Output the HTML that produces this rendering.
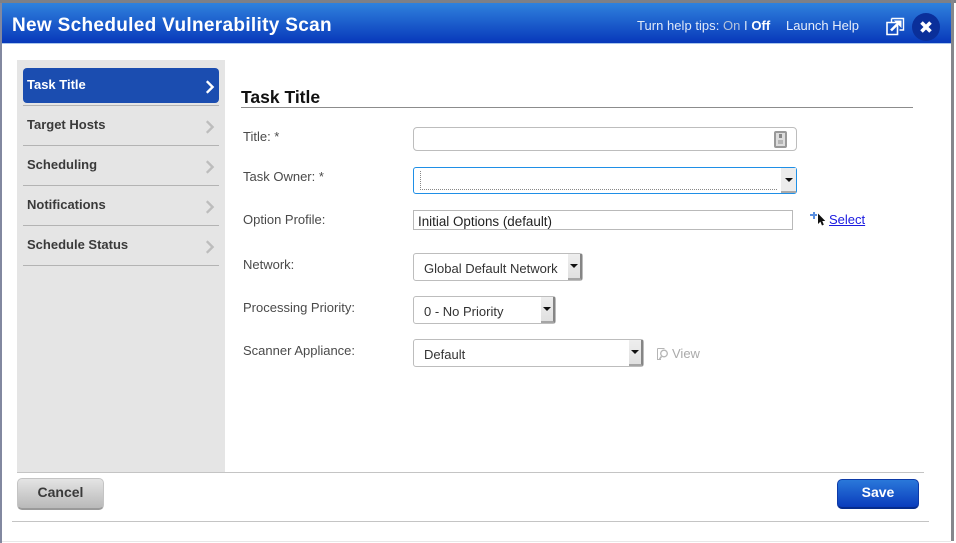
<!DOCTYPE html>
<html><head><meta charset="utf-8"><style>
html,body{margin:0;padding:0;background:#fff}
body{width:956px;height:543px;position:relative;overflow:hidden;font-family:"Liberation Sans",sans-serif}
div,a,span.a{position:absolute;box-sizing:border-box;white-space:nowrap}
.nav{left:27px;font-size:13px;font-weight:bold;color:#3a3a3a;line-height:16px}
.ln{left:23px;width:196px;height:1px;background:#b3b3b3}
.lab{left:243px;font-size:13px;color:#4a4a4a;line-height:16px}
.sel{background:#fff;border:1px solid #bdbdbd;border-radius:3px;font-size:13px;color:#333;line-height:16px}
.btn{top:0;right:0;width:14px;background:linear-gradient(#eeeeee,#e0e0e0);border-right:2px solid #858585;border-bottom:2px solid #a5a5a5}
.tri{width:0;height:0;border-left:4px solid transparent;border-right:4px solid transparent;border-top:4px solid #111}
</style></head><body>
<div style="left:0;top:0;width:956px;height:3px;background:#7d8087"></div>
<div style="left:0;top:3px;width:2px;height:540px;background:#8288a0"></div>
<div style="left:951px;top:0;width:3px;height:541px;background:#85878c"></div>
<div style="left:2px;top:3px;width:949px;height:41px;background:linear-gradient(#2f82dd,#0838ba);border-bottom:1px solid #a9c6ec"></div>
<div style="left:12px;top:14px;font-size:19px;font-weight:bold;color:#fff;line-height:24px;letter-spacing:.32px">New Scheduled Vulnerability Scan</div>
<div style="left:637px;top:18px;font-size:13px;color:#dfe9f8;line-height:16px;letter-spacing:.03px">Turn help tips: <span style="color:#b4c3dc">On</span> I <b style="color:#fff">Off</b></div>
<div style="left:786px;top:18px;font-size:13px;color:#e6eefa;line-height:16px">Launch Help</div>
<svg style="position:absolute;left:886px;top:17px" width="19" height="19" viewBox="0 0 19 19" fill="none" stroke="#fff"><path d="M5.5 1.5H17.5V13H13.5M5.5 1.5V5.5" stroke-width="1.4"/><path d="M1 5.5H11.5V17.5H1Z" stroke-width="1.6"/><path d="M5 13.5L11.5 7" stroke-width="2.6"/><path d="M8 3.5H15.5V11Z" fill="#fff" stroke="none"/></svg>
<div style="left:912px;top:13px;width:28px;height:28px;border-radius:50%;background:#0a2f9a"></div>
<svg style="position:absolute;left:912px;top:13px" width="28" height="28" viewBox="0 0 28 28"><path d="M9.5 9.5L18.5 18.5M18.5 9.5L9.5 18.5" stroke="#fff" stroke-width="3.6" fill="none"/></svg>

<div style="left:17px;top:60px;width:208px;height:412px;background:#e5e5e5"></div>
<div style="left:23px;top:68px;width:196px;height:35px;background:#1b4db0;border-radius:4px"></div>
<div class="nav" style="top:77px;color:#fff">Task Title</div>
<div class="nav" style="top:117px">Target Hosts</div>
<div class="nav" style="top:157px">Scheduling</div>
<div class="nav" style="top:197px">Notifications</div>
<div class="nav" style="top:237px">Schedule Status</div>
<div class="ln" style="top:105px"></div><div class="ln" style="top:145px"></div><div class="ln" style="top:185px"></div><div class="ln" style="top:225px"></div><div class="ln" style="top:265px"></div>
<svg style="position:absolute;left:205px;top:80px" width="10" height="14" viewBox="0 0 10 14"><path d="M1.8 1.2L7.6 7L1.8 12.8" stroke="#fff" stroke-width="2.4" fill="none"/></svg>
<svg style="position:absolute;left:205px;top:120px" width="10" height="14" viewBox="0 0 10 14"><path d="M1.8 1.2L7.6 7L1.8 12.8" stroke="#bdbdbd" stroke-width="2.4" fill="none"/></svg>
<svg style="position:absolute;left:205px;top:160px" width="10" height="14" viewBox="0 0 10 14"><path d="M1.8 1.2L7.6 7L1.8 12.8" stroke="#bdbdbd" stroke-width="2.4" fill="none"/></svg>
<svg style="position:absolute;left:205px;top:200px" width="10" height="14" viewBox="0 0 10 14"><path d="M1.8 1.2L7.6 7L1.8 12.8" stroke="#bdbdbd" stroke-width="2.4" fill="none"/></svg>
<svg style="position:absolute;left:205px;top:240px" width="10" height="14" viewBox="0 0 10 14"><path d="M1.8 1.2L7.6 7L1.8 12.8" stroke="#bdbdbd" stroke-width="2.4" fill="none"/></svg>

<div style="left:241px;top:87px;font-size:17.5px;font-weight:bold;color:#111;line-height:20px">Task Title</div>
<div style="left:241px;top:107px;width:672px;height:1px;background:#8c8c8c"></div>

<div class="lab" style="top:129px">Title: *</div>
<div class="lab" style="top:169px">Task Owner: *</div>
<div class="lab" style="top:212px">Option Profile:</div>
<div class="lab" style="top:257px">Network:</div>
<div class="lab" style="top:300px">Processing Priority:</div>
<div class="lab" style="top:343px">Scanner Appliance:</div>

<div style="left:413px;top:127px;width:384px;height:24px;border:1px solid #bdbdbd;border-radius:4px;background:#fff"></div>
<div style="left:774px;top:131px;width:13px;height:17px;border:2px solid #999;border-radius:2px;background:#ddd"></div>
<div style="left:779px;top:134px;width:3px;height:4px;background:#888"></div>
<div style="left:778px;top:140px;width:5px;height:4px;background:#b5b5b5"></div>

<div style="left:413px;top:167px;width:384px;height:27px;border:1px solid #1f8fe6;border-radius:3px;background:#fff"></div>
<div style="left:420px;top:171px;width:357px;height:19px;border-left:1px dotted #888;border-bottom:1px dotted #888"></div>
<div style="left:781px;top:168px;width:15px;height:25px;background:#ececec;border-bottom:2px solid #aaa"></div>
<div class="tri" style="left:785px;top:178px"></div>

<div style="left:413px;top:210px;width:380px;height:20px;border:1px solid #b9b9b9;font-size:13.4px;color:#222;line-height:21px;padding-left:4px">Initial Options (default)</div>
<div style="left:810px;top:214px;width:7px;height:2px;background:#5a8fe0"></div>
<div style="left:812.5px;top:211.5px;width:2px;height:7px;background:#5a8fe0"></div>
<svg style="position:absolute;left:817px;top:213px" width="9" height="13" viewBox="0 0 9 13"><path d="M1 0.5V11L3.4 8.6L5 12.5L6.8 11.6L5.3 8H8.3Z" fill="#111"/></svg>
<a style="left:829px;top:212px;font-size:13px;color:#1a1ae0;line-height:16px;text-decoration:underline">Select</a>

<div class="sel" style="left:413px;top:253px;width:170px;height:28px"><div style="left:10px;top:7px">Global Default Network</div><div class="btn" style="height:26px"></div><div class="tri" style="right:4px;top:10px"></div></div>
<div class="sel" style="left:413px;top:296px;width:143px;height:28px"><div style="left:10px;top:7px">0 - No Priority</div><div class="btn" style="height:26px"></div><div class="tri" style="right:4px;top:10px"></div></div>
<div class="sel" style="left:413px;top:339px;width:231px;height:28px"><div style="left:10px;top:7px">Default</div><div class="btn" style="height:26px"></div><div class="tri" style="right:4px;top:10px"></div></div>
<svg style="position:absolute;left:656px;top:347px" width="14" height="14" viewBox="0 0 14 14" fill="none" stroke="#b5b5b5"><path d="M1.5 1.5H8.5M1.5 1.5V12.5H5"/><circle cx="8" cy="6.5" r="3.3" stroke-width="1.3"/><path d="M5.5 9.5L3.5 12" stroke-width="1.5"/></svg>
<div style="left:672px;top:346px;font-size:13px;color:#aaa;line-height:16px">View</div>

<div style="left:17px;top:472px;width:907px;height:1px;background:#c4c4c4"></div>
<div style="left:17px;top:478px;width:87px;height:32px;border-radius:5px;background:linear-gradient(#e4e4e4,#b9b9b9);border:1px solid #c4c4c4;border-bottom:2px solid #9a9a9a;font-size:14px;font-weight:bold;color:#3a3a3a;text-align:center;line-height:27px">Cancel</div>
<div style="left:837px;top:479px;width:82px;height:30px;border-radius:5px;background:linear-gradient(#2a78da,#0a3cbc);border:1px solid #0d3aa8;border-bottom:2px solid #062c8c;font-size:14px;font-weight:bold;color:#fff;text-align:center;line-height:25px">Save</div>
<div style="left:12px;top:521px;width:917px;height:1px;background:#c4c4c4"></div>
<div style="left:2px;top:541px;width:949px;height:1px;background:#e8e8e8"></div>
</body></html>
